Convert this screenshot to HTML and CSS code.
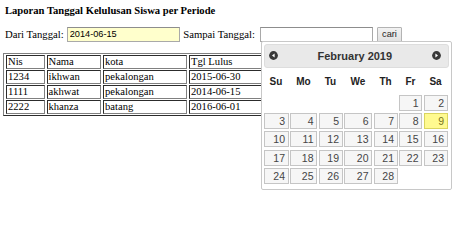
FILE: index.html
```html
<!DOCTYPE html>
<html>
<head>
<meta charset="utf-8">
<title>Laporan Tanggal Kelulusan</title>
<link rel="stylesheet" href="styles.css">
</head>
<body>
<h1 class="title">Laporan Tanggal Kelulusan Siswa per Periode</h1>
<form class="filter">
  <label class="lbl">Dari Tanggal:</label>
  <input class="date-input filled" type="text" value="2014-06-15">
  <label class="lbl lbl-gap">Sampai Tanggal:</label>
  <input class="date-input" type="text" value="">
  <button class="btn" type="button">cari</button>
</form>
<table class="report">
  <tr><td class="c-nis">Nis</td><td class="c-nama">Nama</td><td class="c-kota">kota</td><td class="c-tgl">Tgl Lulus</td></tr>
  <tr><td>1234</td><td>ikhwan</td><td>pekalongan</td><td>2015-06-30</td></tr>
  <tr><td>1111</td><td>akhwat</td><td>pekalongan</td><td>2014-06-15</td></tr>
  <tr><td>2222</td><td>khanza</td><td>batang</td><td>2016-06-01</td></tr>
</table>

<div class="datepicker">
  <div class="dp-header">
    <span class="dp-nav"><svg width="9" height="9" viewBox="0 0 9 9"><circle cx="4.5" cy="4.5" r="4.4" fill="#3a3a3a"/><polygon points="3,4.5 5.6,2.6 5.6,6.4" fill="#fff"/></svg></span>
    <span class="dp-title">February 2019</span>
    <span class="dp-nav"><svg width="9" height="9" viewBox="0 0 9 9"><circle cx="4.5" cy="4.5" r="4.4" fill="#3a3a3a"/><polygon points="6,4.5 3.4,2.6 3.4,6.4" fill="#fff"/></svg></span>
  </div>
  <div class="dp-week">
    <span>Su</span><span>Mo</span><span>Tu</span><span>We</span><span>Th</span><span>Fr</span><span>Sa</span>
  </div>
  <div class="dp-days">
    <span></span><span></span><span></span><span></span><span></span>
    <span class="day">1</span><span class="day">2</span>
    <span class="day">3</span><span class="day">4</span><span class="day">5</span><span class="day">6</span><span class="day">7</span><span class="day">8</span><span class="day today">9</span>
    <span class="day">10</span><span class="day">11</span><span class="day">12</span><span class="day">13</span><span class="day">14</span><span class="day">15</span><span class="day">16</span>
    <span class="day">17</span><span class="day">18</span><span class="day">19</span><span class="day">20</span><span class="day">21</span><span class="day">22</span><span class="day">23</span>
    <span class="day">24</span><span class="day">25</span><span class="day">26</span><span class="day">27</span><span class="day">28</span>
  </div>
</div>
</body>
</html>
```

FILE: styles.css
```css
html {
  background: #ffffff;
  height: 100%;
}
body {
  box-sizing: border-box;
  min-height: 209px;
  margin: 0;
  padding: 0 5px;
  position: relative;
  font-family: "Liberation Serif", "Times New Roman", serif;
  font-size: 10.7px;
  color: #000;
}
.title {
  margin: 4px 0 0;
  font-size: 10.6px;
  line-height: 13px;
  font-weight: bold;
}
.filter {
  display: flex;
  align-items: center;
  height: 15.5px;
  margin: 9.7px 0 0;
}
.lbl {
  line-height: 13px;
  margin-right: 3px;
}
.lbl-gap {
  margin-left: 3.5px;
  margin-right: 5px;
}
.date-input {
  box-sizing: border-box;
  width: 113px;
  height: 15px;
  margin: 0;
  padding: 0 2px;
  border: 1px solid #a9a9a9;
  border-top-color: #8d8d8d;
  background: #fff;
  font-family: "Liberation Sans", Arial, sans-serif;
  font-size: 9.2px;
  color: #000;
  outline: none;
}
.date-input.filled {
  background: #ffffcc;
}
.btn {
  box-sizing: border-box;
  width: 25px;
  height: 15.5px;
  margin: 0 0 0 4px;
  padding: 0;
  border: 1px solid #b3b3b3;
  border-radius: 1px;
  background: linear-gradient(#f2f2f2, #e2e2e2);
  font-family: "Liberation Sans", Arial, sans-serif;
  font-size: 9.2px;
  color: #222;
}
.report {
  margin: 11.3px 0 0 -2px;
  border: 1px outset #808080;
  border-spacing: 2px 1.5px;
  font-size: 10.6px;
}
.report td {
  border: 1px inset #808080;
  padding: 0 1px;
  line-height: 11.9px;
  white-space: nowrap;
  text-align: left;
}
.c-nis { width: 34.5px; }
.c-nama { width: 50.5px; }
.c-kota { width: 80px; }
.c-tgl { width: 80px; }

.datepicker {
  position: absolute;
  left: 260.5px;
  top: 40.7px;
  width: 185px;
  padding: 2px;
  border: 1px solid #c8c8c8;
  border-radius: 2px;
  background: #fff;
  font-family: "Liberation Sans", Arial, sans-serif;
}
.dp-header {
  box-sizing: border-box;
  height: 24px;
  display: flex;
  align-items: center;
  padding: 0 6.7px 0 4.3px;
  background: #e9e9e9;
  border: 1px solid #dddddd;
  border-radius: 3px;
}
.dp-nav {
  display: flex;
  width: 9px;
  height: 9px;
}
.dp-title {
  flex: 1;
  text-align: center;
  font-weight: bold;
  font-size: 11px;
  color: #333;
}
.dp-week,
.dp-days {
  display: grid;
  grid-template-columns: 25px 27px 24px 28px 24px 23px 24px;
  column-gap: 1.5px;
}
.dp-week {
  height: 25px;
  margin-top: 1px;
  align-items: center;
  text-align: center;
  font-weight: bold;
  font-size: 10px;
  color: #222;
}
.dp-days {
  margin: 1px 0 2.8px;
  grid-auto-rows: 16px;
  row-gap: 2.3px;
}
.day {
  box-sizing: border-box;
  border: 1px solid #c5c5c5;
  background: #f6f6f6;
  color: #454545;
  font-size: 10.5px;
  line-height: 14px;
  text-align: right;
  padding-right: 2.5px;
}
.day.today {
  border-color: #dad55e;
  background: #fffa90;
  color: #777620;
}
```
